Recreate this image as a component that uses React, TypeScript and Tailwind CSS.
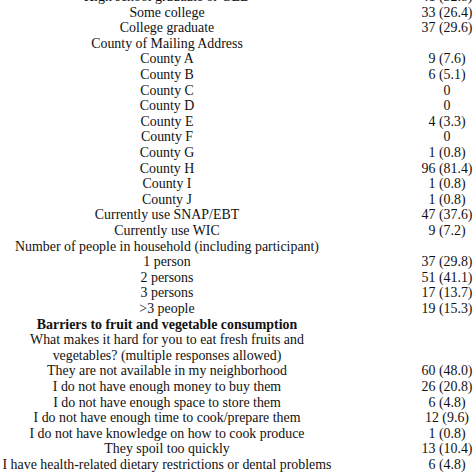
import React from "react";

type Row = { label: string; value?: string; bold?: boolean };

const rows: Row[] = [
  { label: "High school graduate or GED", value: "41 (32.8)" },
  { label: "Some college", value: "33 (26.4)" },
  { label: "College graduate", value: "37 (29.6)" },
  { label: "County of Mailing Address" },
  { label: "County A", value: "9 (7.6)" },
  { label: "County B", value: "6 (5.1)" },
  { label: "County C", value: "0" },
  { label: "County D", value: "0" },
  { label: "County E", value: "4 (3.3)" },
  { label: "County F", value: "0" },
  { label: "County G", value: "1 (0.8)" },
  { label: "County H", value: "96 (81.4)" },
  { label: "County I", value: "1 (0.8)" },
  { label: "County J", value: "1 (0.8)" },
  { label: "Currently use SNAP/EBT", value: "47 (37.6)" },
  { label: "Currently use WIC", value: "9 (7.2)" },
  { label: "Number of people in household (including participant)" },
  { label: "1 person", value: "37 (29.8)" },
  { label: "2 persons", value: "51 (41.1)" },
  { label: "3 persons", value: "17 (13.7)" },
  { label: ">3 people", value: "19 (15.3)" },
  { label: "Barriers to fruit and vegetable consumption", bold: true },
  { label: "What makes it hard for you to eat fresh fruits and" },
  { label: "vegetables? (multiple responses allowed)" },
  { label: "They are not available in my neighborhood", value: "60 (48.0)" },
  { label: "I do not have enough money to buy them", value: "26 (20.8)" },
  { label: "I do not have enough space to store them", value: "6 (4.8)" },
  { label: "I do not have enough time to cook/prepare them", value: "12 (9.6)" },
  { label: "I do not have knowledge on how to cook produce", value: "1 (0.8)" },
  { label: "They spoil too quickly", value: "13 (10.4)" },
  { label: "I have health-related dietary restrictions or dental problems", value: "6 (4.8)" },
];

export default function App() {
  return (
    <div className="w-[474px] h-[474px] overflow-hidden bg-white text-[#111]">
      <div
        className="-mt-[10.9px] grid grid-cols-[334px_86px_54px] text-[13.9px] leading-[15.6px]"
        style={{ fontFamily: '"Liberation Serif", "DejaVu Serif", serif' }}
      >
        {rows.map((r, i) => (
          <React.Fragment key={i}>
            <div className={"text-center whitespace-nowrap " + (r.bold ? "font-bold" : "")}>
              {r.label}
            </div>
            <div />
            <div className="text-center whitespace-nowrap">{r.value ?? ""}</div>
          </React.Fragment>
        ))}
      </div>
    </div>
  );
}
